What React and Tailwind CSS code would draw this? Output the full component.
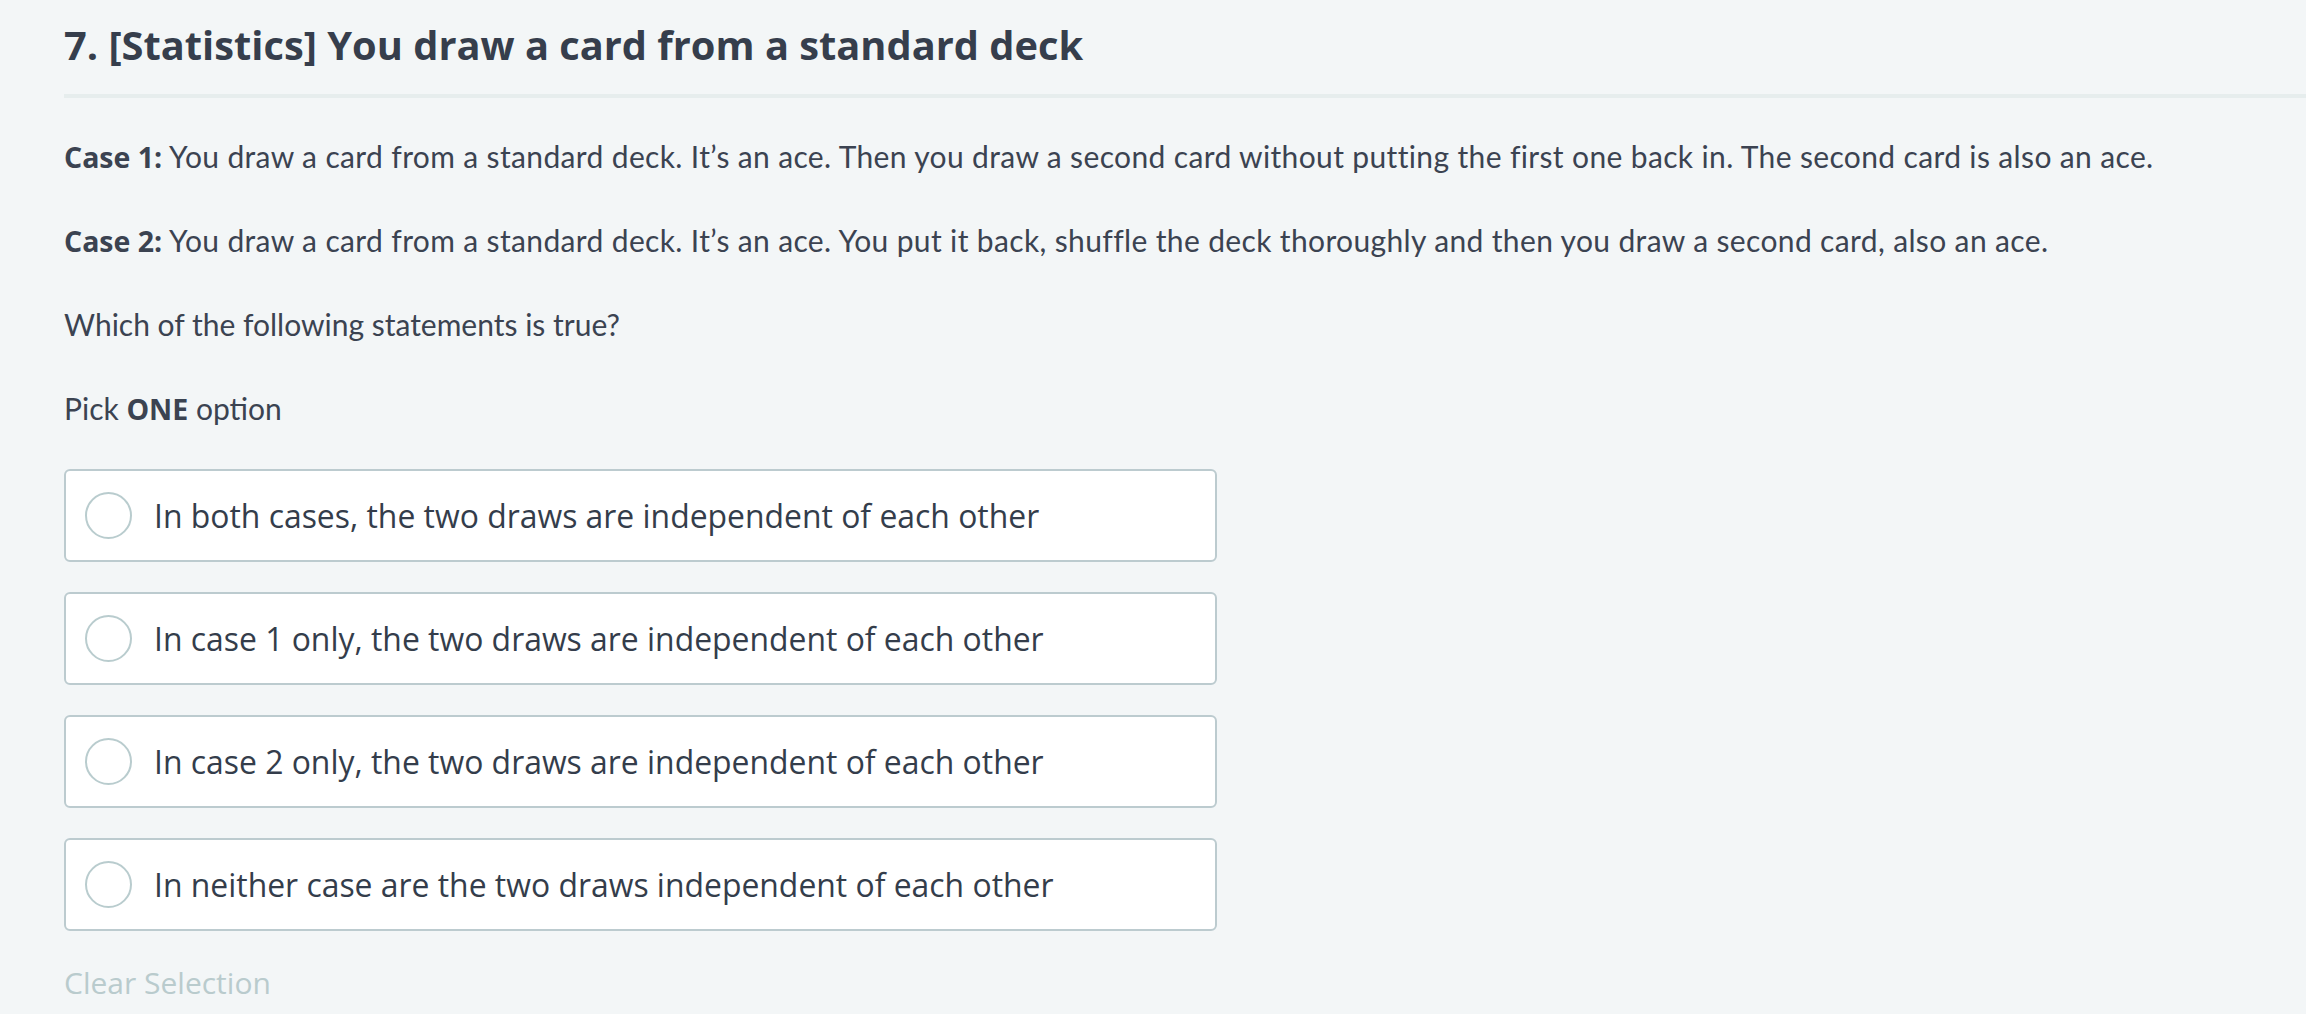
import { useState } from "react";

var OPTIONS = [
  "In both cases, the two draws are independent of each other",
  "In case 1 only, the two draws are independent of each other",
  "In case 2 only, the two draws are independent of each other",
  "In neither case are the two draws independent of each other",
];

var SANS = "font-['Open_Sans',sans-serif]";
var BODY = "font-['Lato','Noto_Sans',sans-serif]";
var BOLD = SANS + " font-bold text-[28.5px] leading-none tracking-normal";

function Option(p) {
  return (
    <div onClick={p.onPick}
      className="flex items-center h-[93px] w-[1153px] bg-white border-2 border-[#bccbcf] rounded-[6px] pl-[19px] cursor-pointer">
      <div className="w-[47px] h-[47px] rounded-full border-2 border-[#b9ccce] shrink-0 flex items-center justify-center">
        {p.checked && <div className="w-[25px] h-[25px] rounded-full bg-[#39a0a8]" />}
      </div>
      <span className={SANS + " ml-[22px] text-[31.9px] leading-[46px] text-[#343d4b]"}>{p.label}</span>
    </div>
  );
}

export default function App() {
  var [picked, setPicked] = useState(-1);
  return (
    <div className="min-h-[1014px] bg-[#f3f6f7] overflow-hidden">
      <div className="pl-[64px] pt-[20px]">
        <h1 className={SANS + " text-[39.8px] leading-[50px] font-bold text-[#363e4c] whitespace-nowrap"}>
          7. [Statistics] You draw a card from a standard deck
        </h1>
        <div className="mt-[24px] h-[4px] bg-[#e6eded]" />

        <div className={BODY + " text-[30px] leading-[45px] tracking-[0.36px] text-[#3b4351] whitespace-nowrap"}>
          <p className="mt-[36px]">
            <b className={BOLD}>Case 1:</b> You draw a card from a standard deck. It’s an ace. Then you draw a second card without putting the first one back in. The second card is also an ace.
          </p>
          <p className="mt-[39px]">
            <b className={BOLD}>Case 2:</b> You draw a card from a standard deck. It’s an ace. You put it back, shuffle the deck thoroughly and then you draw a second card, also an ace.
          </p>
          <p className="mt-[39px] tracking-normal">Which of the following statements is true?</p>
          <p className="mt-[39px] tracking-normal">
            Pick <b className={BOLD}>ONE</b> option
          </p>
        </div>

        <div className="mt-[38px] flex flex-col gap-[30px]">
          {OPTIONS.map(function (o, i) {
            return <Option key={i} label={o} checked={picked === i} onPick={function () { setPicked(i); }} />;
          })}
        </div>

        <div onClick={function () { setPicked(-1); }}
          className={SANS + " mt-[32px] text-[30px] leading-[40px] text-[#b9cbcd] cursor-pointer"}>
          Clear Selection
        </div>
      </div>
    </div>
  );
}
